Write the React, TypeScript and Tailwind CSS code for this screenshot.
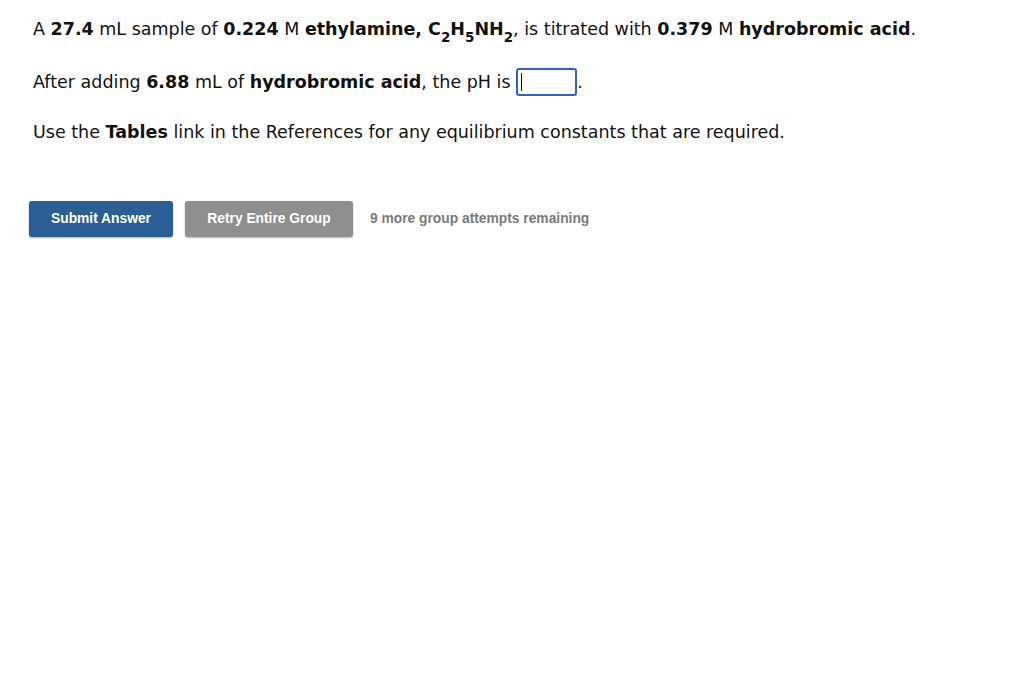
import React from "react";

export default function App() {
  const v = { fontFamily: "Verdana, 'DejaVu Sans', sans-serif" };
  const a = { fontFamily: "'Liberation Sans', Arial, sans-serif" };
  const sub = "text-[13.5px] align-[-4px] leading-none";
  return (
    <div className="w-[1024px] h-[680px] bg-white text-[#111]">
      <div className="pl-[33px] pt-[16px] text-[17.5px]" style={v}>
        <p className="leading-[26px]">
          A <b>27.4</b> mL sample of <b>0.224</b> M <b>ethylamine, C<sub className={sub}>2</sub>H<sub className={sub}>5</sub>NH<sub className={sub}>2</sub></b>, is titrated with <b>0.379</b> M <b>hydrobromic acid</b>.
        </p>
        <p className="mt-[26px] leading-[28px] flex items-center">
          <span>After adding <b>6.88</b> mL of <b>hydrobromic acid</b>, the pH is&nbsp;</span>
          <span className="w-[61px] h-[28px] border-2 border-[#2f62c8] rounded-[3px] flex items-center pl-[3px]">
            <span className="w-[1px] h-[18px] bg-black"></span>
          </span>
          <span>.</span>
        </p>
        <p className="mt-[23px] leading-[26px]">
          Use the <b>Tables</b> link in the References for any equilibrium constants that are required.
        </p>
      </div>
      <div className="pl-[29px] pt-[56px] flex items-center" style={a}>
        <button className="w-[144px] h-[36px] bg-[#2a5f94] text-white font-bold text-[13.8px] rounded-[3px] shadow-[0_1px_2px_rgba(0,0,0,0.3)]">
          Submit Answer
        </button>
        <button className="ml-[12px] w-[168px] h-[36px] bg-[#8f8f8f] text-white font-bold text-[13.8px] rounded-[3px] shadow-[0_1px_2px_rgba(0,0,0,0.3)]">
          Retry Entire Group
        </button>
        <span className="ml-[17px] text-[13.8px] font-bold text-[#7a7a7a]">9 more group attempts remaining</span>
      </div>
    </div>
  );
}
